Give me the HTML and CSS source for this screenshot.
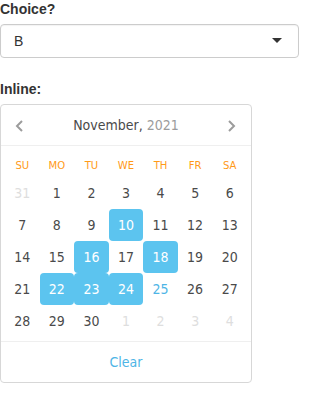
FILE: index.html
```html
<!DOCTYPE html>
<html>
<head>
<meta charset="utf-8">
<link rel="stylesheet" href="styles.css">
</head>
<body>
<div class="page">
  <div class="group first">
    <label class="lbl">Choice?</label>
    <div class="select"><span class="val">B</span><span class="caret"></span></div>
  </div>
  <div class="group second">
    <label class="lbl">Inline:</label>
    <div class="dp">
      <div class="nav">
        <div class="act"><svg width="32" height="32" viewBox="0 0 32 32"><path d="M 17,12 l -5,5 l 5,5" fill="none" stroke="#9c9c9c" stroke-width="2"/></svg></div>
        <div class="title">November, <i>2021</i></div>
        <div class="act"><svg width="32" height="32" viewBox="0 0 32 32"><path d="M 14,12 l 5,5 l -5,5" fill="none" stroke="#9c9c9c" stroke-width="2"/></svg></div>
      </div>
      <div class="content">
        <div class="names">
          <span>Su</span><span>Mo</span><span>Tu</span><span>We</span><span>Th</span><span>Fr</span><span>Sa</span>
        </div>
        <div class="cells">
          <span class="cell other">31</span><span class="cell">1</span><span class="cell">2</span><span class="cell">3</span><span class="cell">4</span><span class="cell">5</span><span class="cell">6</span>
          <span class="cell">7</span><span class="cell">8</span><span class="cell">9</span><span class="cell sel">10</span><span class="cell">11</span><span class="cell">12</span><span class="cell">13</span>
          <span class="cell">14</span><span class="cell">15</span><span class="cell sel">16</span><span class="cell">17</span><span class="cell sel">18</span><span class="cell">19</span><span class="cell">20</span>
          <span class="cell">21</span><span class="cell sel">22</span><span class="cell sel">23</span><span class="cell sel">24</span><span class="cell cur">25</span><span class="cell">26</span><span class="cell">27</span>
          <span class="cell">28</span><span class="cell">29</span><span class="cell">30</span><span class="cell other">1</span><span class="cell other">2</span><span class="cell other">3</span><span class="cell other">4</span>
        </div>
      </div>
      <div class="buttons"><span class="btn">Clear</span></div>
    </div>
  </div>
</div>
</body>
</html>
```
FILE: styles.css
```css
* { box-sizing: border-box; }
html, body { margin: 0; padding: 0; background: #fff; }
body {
  font-family: "Liberation Sans", Arial, sans-serif;
  font-size: 14px;
  line-height: 20px;
  color: #333;
  width: 299px;
}
.page { padding-top: 0; }
.group { display: flex; flex-direction: column; align-items: flex-start; }
.first { margin-top: -1px; }
.second { margin-top: 21px; }
.lbl {
  font-weight: bold;
  line-height: 20px;
  margin-bottom: 5px;
  color: #333;
}
.select {
  width: 299px;
  height: 34px;
  border: 1px solid #ccc;
  border-radius: 4px;
  padding: 6px 16px 6px 13px;
  display: flex;
  align-items: center;
  justify-content: space-between;
  box-shadow: inset 0 1px 1px rgba(0,0,0,0.05);
}
.val { color: #333; }
.caret {
  width: 0; height: 0;
  border-style: solid;
  border-width: 5px 5px 0 5px;
  border-color: #333 transparent transparent transparent;
  margin-top: -1px;
}
.dp {
  width: 252px;
  border: 1px solid #d7d7d7;
  border-radius: 4px;
  font-family: "DejaVu Sans Condensed", "DejaVu Sans", sans-serif;
  font-stretch: condensed;
  font-size: 14px;
  color: #4a4a4a;
}
.nav {
  display: flex;
  justify-content: space-between;
  align-items: center;
  padding: 4px;
  min-height: 40px;
  border-bottom: 1px solid #efefef;
}
.act { width: 32px; height: 32px; display: flex; }
.title { font-size: 14px; color: #4a4a4a; }
.title i { font-style: normal; color: #9c9c9c; }
.content { padding: 4px; }
.names {
  display: grid;
  grid-template-columns: repeat(7, 1fr);
  margin: 8px 0 3px;
}
.names span {
  text-align: center;
  text-transform: uppercase;
  font-size: 11.2px;
  line-height: 16px;
  color: #ff9a19;
}
.cells {
  display: grid;
  grid-template-columns: repeat(7, 1fr);
  grid-auto-rows: 32px;
}
.cell {
  display: flex;
  align-items: center;
  justify-content: center;
  border-radius: 4px;
  color: #4a4a4a;
}
.cell.other { color: #dedede; }
.cell.cur { color: #4eb5e6; }
.cell.sel { background: #5cc4ef; color: #fff; }
.buttons {
  border-top: 1px solid #efefef;
  padding: 4px;
  display: flex;
}
.btn {
  flex: 1;
  height: 32px;
  display: flex;
  align-items: center;
  justify-content: center;
  color: #4eb5e6;
}
```
